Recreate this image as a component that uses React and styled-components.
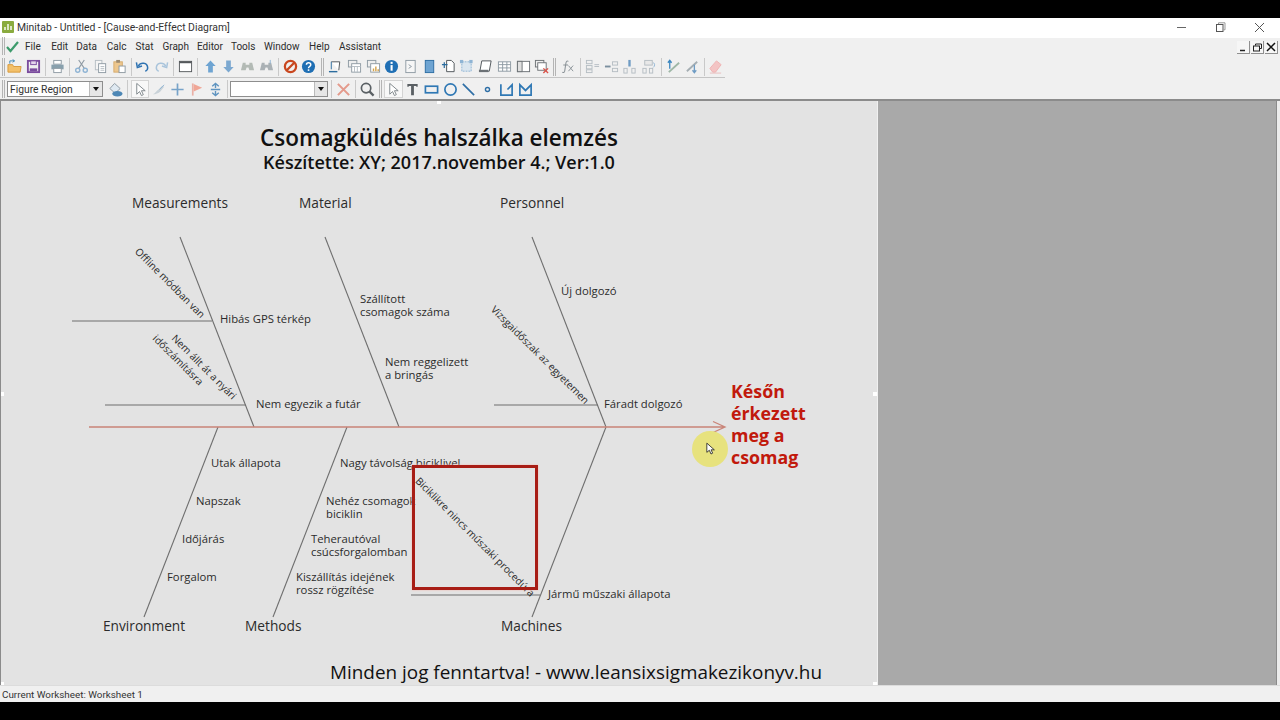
import React from "react";
import styled, { createGlobalStyle } from "styled-components";

const UI_FONT = `Roboto, "Open Sans", "Liberation Sans", sans-serif`;
const DIAGRAM_FONT = `"Open Sans", "Noto Sans", "Liberation Sans", sans-serif`;

const Global = createGlobalStyle`
  html, body { margin: 0; padding: 0; background: #000; overflow: hidden; }
  #root { width: 1280px; height: 720px; }
`;

const Screen = styled.div`
  width: 1280px;
  height: 720px;
  display: flex;
  flex-direction: column;
  background: #000;
  font-family: ${UI_FONT};
  color: #2a2a2a;
  overflow: hidden;
`;

const Letterbox = styled.div`
  height: 18px;
  flex: none;
  background: #000;
`;

const TitleBar = styled.div`
  height: 20px;
  flex: none;
  box-sizing: border-box;
  background: #fff;
  display: flex;
  align-items: center;
  padding: 0 0 2px 2px;
  gap: 3px;
  font-size: 10.4px;
  color: #333;
`;

const TitleText = styled.span`
  flex: 1;
`;

const WindowButtons = styled.div`
  display: flex;
  align-items: center;
  padding-right: 1.5px;
`;

const WindowButton = styled.div`
  width: 39px;
  height: 18px;
  display: flex;
  align-items: center;
  justify-content: center;
`;

const MenuBar = styled.div`
  height: 18px;
  flex: none;
  box-sizing: border-box;
  background: #f0f0f0;
  display: flex;
  align-items: center;
  padding: 0 0 2px 2px;
  font-size: 10px;
  color: #2d2d2d;
  position: relative;
`;

const MenuItem = styled.span`
  margin-left: ${(p) => p.$gap}px;
`;

const MdiButtons = styled.div`
  position: absolute;
  right: 2px;
  top: 3px;
  display: flex;
  gap: 1px;
`;

const MdiButton = styled.div`
  width: 13px;
  height: 13px;
  display: flex;
  align-items: center;
  justify-content: center;
  background: #f6f6f6;
  border-right: 1px solid #8f8f8f;
  border-bottom: 1px solid #8f8f8f;
  box-sizing: border-box;
`;

const ToolRow = styled.div`
  height: ${(p) => p.$height}px;
  flex: none;
  box-sizing: border-box;
  background: #f0f0f0;
  display: flex;
  align-items: center;
`;

const ToolGroup = styled.div`
  height: 21px;
  display: flex;
  align-items: center;
  width: ${(p) => p.$width}px;
  box-sizing: border-box;
  flex: none;
  border-bottom: ${(p) => (p.$line ? `1px solid ${p.$line}` : "none")};
  padding: ${(p) => (p.$line ? 0 : 1)}px 0 0 2px;
`;

const ToolBtn = styled.div`
  width: 18.75px;
  height: 18px;
  flex: none;
  display: flex;
  align-items: center;
  justify-content: center;
  box-sizing: border-box;
  ${(p) => p.$pressed && "background: #f8f8f8; border: 1px solid #d4d4d4;"}
`;

const Sep = styled.div`
  flex: none;
  width: 1px;
  height: 18px;
  background: #c9c9c9;
  margin: 0 ${(p) => p.$space ?? 2}px;
`;

const Grip = styled.div`
  flex: none;
  width: 3px;
  height: 18px;
  box-sizing: border-box;
  border-left: 1px solid #b4b4b4;
  border-right: 1px solid #b4b4b4;
  margin: 0 ${(p) => p.$space ?? 2}px;
  margin-left: ${(p) => (p.$first ? 0 : p.$space ?? 2)}px;
`;

const Gap = styled.div`
  flex: none;
  width: ${(p) => p.$width}px;
`;

const Combo = styled.div`
  flex: none;
  width: ${(p) => p.$width}px;
  height: 16px;
  box-sizing: border-box;
  background: #fff;
  border: 1px solid #8e8e8e;
  display: flex;
  align-items: center;
  justify-content: space-between;
  font-size: 10.3px;
  padding-left: 2px;
  color: #333;
`;

const ComboArrow = styled.div`
  width: 12px;
  height: 14px;
  background: #e6e6e6;
  border-left: 1px solid #bbb;
  display: flex;
  align-items: center;
  justify-content: center;
  &::after {
    content: "";
    border: 3px solid transparent;
    border-top: 4px solid #111;
    border-bottom: 0;
  }
`;

const Workspace = styled.div`
  flex: 1;
  display: flex;
  background: #a9a9a9;
  border-top: 2px solid #8b8b8b;
  min-height: 0;
`;

const Figure = styled.div`
  position: relative;
  width: 876px;
  flex: none;
  background: #e3e3e3;
  border-left: 1px solid #8b8b8b;
  border-right: 1px solid #f0f0f0;
  overflow: hidden;
  font-family: ${DIAGRAM_FONT};
`;

const Diagram = styled.div`
  position: absolute;
  left: 0;
  top: -1px;
`;

const Backdrop = styled.div`
  flex: 1;
  background: #a9a9a9;
`;

const Scrollbar = styled.div`
  width: 3px;
  flex: none;
  background: #ececec;
  border-left: 1px solid #8b8b8b;
`;

const Handle = styled.div`
  position: absolute;
  left: ${(p) => p.$x}px;
  top: ${(p) => p.$y}px;
  width: 4px;
  height: 4px;
  background: #fff;
`;

const Bones = styled.svg`
  position: absolute;
  left: -1px;
  top: -100px;
  width: 1280px;
  height: 720px;
`;

const Centered = styled.div`
  position: absolute;
  left: ${(p) => p.$x}px;
  top: ${(p) => p.$y}px;
  transform: translate(-50%, -50%);
  white-space: nowrap;
  line-height: 1;
  color: #111;
  font-size: ${(p) => p.$size}px;
  font-weight: ${(p) => p.$weight};
`;

const Category = styled.div`
  position: absolute;
  left: ${(p) => p.$x}px;
  top: ${(p) => p.$y}px;
  transform: translateY(-50%);
  font-size: 13.7px;
  white-space: nowrap;
  color: #2b2b2b;
`;

const Cause = styled.div`
  position: absolute;
  left: ${(p) => p.$x}px;
  top: ${(p) => p.$y}px;
  font-size: 11.3px;
  line-height: 12.6px;
  white-space: pre;
  color: #2b2b2b;
`;

const SlantedCause = styled.div`
  position: absolute;
  left: ${(p) => p.$x}px;
  top: ${(p) => p.$y}px;
  transform: translate(-50%, -50%) rotate(45deg);
  font-size: 10.2px;
  line-height: 13px;
  white-space: pre;
  color: #2b2b2b;
`;

const Effect = styled.div`
  position: absolute;
  left: 730px;
  top: 280px;
  font-size: 17.8px;
  line-height: 22px;
  font-weight: 700;
  white-space: pre;
  color: #c1190c;
`;

const Highlight = styled.div`
  position: absolute;
  left: 411px;
  top: 365px;
  width: 120px;
  height: 119px;
  border: 3px solid #a81d15;
  box-shadow: 0 0 2px #f3b7ae;
`;

const CursorHalo = styled.div`
  position: absolute;
  left: 690.500px;
  top: 331px;
  width: 36px;
  height: 36px;
  box-sizing: border-box;
  padding-left: 3px;
  border-radius: 50%;
  background: #e7e27e;
  display: flex;
  align-items: center;
  justify-content: center;
`;

const StatusBar = styled.div`
  height: 17px;
  flex: none;
  background: #f0f0f0;
  border-top: 1px solid #dcdcdc;
  box-sizing: border-box;
  display: flex;
  align-items: center;
  padding: 1px 0 0 2px;
  font-size: 9.85px;
  color: #333;
`;

const PALE = "#8fb4d4";
const GREY = "#8e9aa3";
const LIGHT = "#b5bdc3";

/* toolbar glyphs, 16x16 */
const glyphs = {
  open: <><path d="M1 6h5l1 2h8l-1 6H1z" fill="#f3c06a" stroke="#d89a3c" /><path d="M3 5V2h5M8 2l-2-1.500M8 2L6 3.500" fill="none" stroke="#3f88b8" /></>,
  save: <><rect x="2" y="2" width="12" height="12" fill="none" stroke="#7b4c9e" strokeWidth="2" /><rect x="5" y="2" width="6" height="4" fill="#e4d6ec" stroke="#7b4c9e" /><rect x="4" y="10" width="8" height="3" fill="#7b4c9e" /></>,
  print: <><rect x="4" y="1.500" width="8" height="4" fill="#fff" stroke={GREY} /><rect x="1.500" y="6" width="13" height="5" fill="#88a0ad" /><rect x="4" y="10" width="8" height="4.500" fill="#fff" stroke={GREY} /></>,
  cut: <><path d="M5 1l6 9M11 1L5 10" stroke={GREY} strokeWidth="1.200" /><circle cx="4" cy="12" r="2.200" fill="none" stroke={PALE} strokeWidth="1.500" /><circle cx="12" cy="12" r="2.200" fill="none" stroke={PALE} strokeWidth="1.500" /></>,
  copy: <><rect x="2.500" y="1.500" width="7" height="10" fill="#f4f4f4" stroke={LIGHT} /><rect x="6" y="5" width="7.500" height="9.500" fill="#fff" stroke={GREY} /><path d="M8 8h4M8 10h4M8 12h4" stroke={LIGHT} /></>,
  paste: <><rect x="2" y="3" width="9" height="11" fill="#edc78e" stroke="#d5aa6c" /><rect x="4.500" y="1" width="4" height="3" fill="#9c8b72" /><rect x="7.500" y="7.500" width="6.500" height="7" fill="#fff" stroke={GREY} /></>,
  undo: <><path d="M3.500 7.500C6 3 13 3.500 13.500 9c.2 2-1 3.500-2.500 4" fill="none" stroke="#2f73b2" strokeWidth="1.600" /><path d="M1.500 3.500l1 5.500 5-1.500" fill="none" stroke="#2f73b2" strokeWidth="1.600" /></>,
  redo: <><path d="M12.500 7.500C10 3 3 3.500 2.500 9c-.2 2 1 3.500 2.500 4" fill="none" stroke="#a9c4db" strokeWidth="1.600" /><path d="M14.500 3.500l-1 5.500-5-1.500" fill="none" stroke="#a9c4db" strokeWidth="1.600" /></>,
  pane: <><rect x="1.500" y="2.500" width="13" height="11" fill="#fff" stroke="#55595c" /><rect x="1.500" y="2.500" width="13" height="2" fill="#55595c" /></>,
  up: <path d="M8 1.500l5.500 6H10.500v7h-5v-7H2.500z" fill="#6ea4d2" />,
  down: <path d="M8 14.500l5.500-6H10.500v-7h-5v7H2.500z" fill="#7ca8d0" />,
  binoA: <path d="M3 4h3v2h4V4h3l2 8h-5l-1-3H7l-1 3H1z" fill="#b3bab5" />,
  binoB: <><path d="M3 4h3v2h4V4h3l2 8h-5l-1-3H7l-1 3H1z" fill="#aab1b5" /><path d="M12 1v4" stroke={PALE} /></>,
  stop: <><circle cx="8" cy="8" r="6" fill="none" stroke="#c9471f" strokeWidth="2.400" /><path d="M4 12l8-8" stroke="#c9471f" strokeWidth="2.400" /></>,
  help: <><circle cx="8" cy="8" r="7" fill="#1f6fb4" /><path d="M5.800 6.200c0-3 4.600-3 4.600 0 0 1.800-2.400 1.800-2.400 3.600" fill="none" stroke="#fff" strokeWidth="1.600" /><rect x="7.200" y="11" width="1.700" height="1.700" fill="#fff" /></>,
  info: <><circle cx="8" cy="8" r="7" fill="#1f6fb4" /><rect x="7" y="3" width="2.200" height="2.200" fill="#fff" /><rect x="7" y="6.500" width="2.200" height="6" fill="#fff" /></>,
  note: <><path d="M3.500 3h9l-1 9" fill="#fff" stroke="#4d5357" /><path d="M1 13.500h9" stroke="#2b6c9e" strokeWidth="1.500" /><path d="M3.500 3v8" stroke="#2b6c9e" /></>,
  stackA: <><rect x="1.500" y="1.500" width="9" height="7" fill="#eee" stroke={GREY} /><rect x="5" y="5" width="9.500" height="9" fill="#fff" stroke={GREY} /><path d="M5 8h9.500M8 8v6M11 8v6" stroke={LIGHT} /></>,
  stackB: <><rect x="1.500" y="1.500" width="9" height="7" fill="#eee" stroke={GREY} /><rect x="5" y="5" width="9.500" height="9" fill="#fff" stroke={GREY} /><path d="M8 13V10M10.500 13V8M13 13v-2" stroke="#d3a24a" strokeWidth="1.500" /></>,
  prompt: <><rect x="3" y="1.500" width="10" height="13" fill="#f6f6f6" stroke={GREY} /><path d="M6 6l3 2-3 2" fill="none" stroke={GREY} /></>,
  notebook: <rect x="3.500" y="1.500" width="9" height="13" fill="#6ea4d2" stroke="#2c6da3" />,
  newPage: <><path d="M6 1.500h5l3 3v9H6z" fill="#fff" stroke="#4d5357" /><path d="M1 6h6M3.500 3.500v6" stroke="#2b6c9e" strokeWidth="1.300" /></>,
  nodes: <><rect x="3" y="3" width="10" height="10" fill="#dbe6ef" stroke={PALE} strokeDasharray="2 1" /><rect x="1" y="1" width="3.500" height="3.500" fill={PALE} /><rect x="11" y="1" width="3.500" height="3.500" fill={PALE} /></>,
  scroll: <><path d="M4 2h10l-2 11H2z" fill="#fff" stroke="#4d5357" /><rect x="1" y="11.500" width="10" height="2.500" fill="#6b7175" /></>,
  grid: <><rect x="1.500" y="3" width="13" height="10" fill="#fff" stroke={GREY} /><path d="M1.500 6h13M1.500 9.500h13M6 3v10M10.500 3v10" stroke={GREY} /></>,
  split: <><rect x="1.500" y="2.500" width="13" height="11" fill="#fff" stroke="#6c7175" /><rect x="1.500" y="2.500" width="5" height="11" fill="#e0e0e0" stroke="#6c7175" /></>,
  closeAll: <><rect x="1.500" y="1.500" width="9" height="7" fill="#eee" stroke="#6c7175" /><rect x="4" y="4" width="9" height="8" fill="#fff" stroke="#6c7175" /><path d="M10 10l5 5M15 10l-5 5" stroke="#d9534a" strokeWidth="1.500" /></>,
  fx: <><path d="M9 2.500C7 1.500 6.500 3 6.200 5L5 13c-.3 1.500-1.500 1.800-2.500 1M3.500 6.500h5" fill="none" stroke="#8a9297" strokeWidth="1.100" /><path d="M9 7l5 6M14 7l-5 6" stroke="#8a9297" /></>,
  flowA: <><rect x="1.500" y="1.500" width="6" height="3.500" fill="none" stroke={LIGHT} /><rect x="1.500" y="7" width="6" height="3.500" fill="none" stroke={LIGHT} /><rect x="1.500" y="11.500" width="6" height="3" fill="none" stroke={LIGHT} /><path d="M10 6h5M10 8h5" stroke={LIGHT} /></>,
  flowB: <><path d="M1 8h6" stroke="#7b8f9f" strokeWidth="2" /><rect x="9" y="3" width="5.500" height="3.500" fill="none" stroke={LIGHT} /><rect x="9" y="10" width="5.500" height="3.500" fill="none" stroke={LIGHT} /></>,
  flowC: <><path d="M8 1v7" stroke="#6f9cc4" strokeWidth="2.500" /><rect x="2" y="10" width="3.500" height="5" fill="none" stroke={LIGHT} /><rect x="10.500" y="10" width="3.500" height="5" fill="none" stroke={LIGHT} /></>,
  flowD: <><rect x="4" y="1.500" width="8" height="5" fill="#e8e8e8" stroke={LIGHT} /><rect x="2" y="10" width="3.500" height="5" fill="none" stroke={LIGHT} /><rect x="9" y="10" width="3.500" height="5" fill="none" stroke={LIGHT} /><path d="M13 4c2 0 2 4 0 5" fill="none" stroke={PALE} /></>,
  sendA: <><path d="M3 14L14 4" stroke="#9eb7a6" strokeWidth="2" /><path d="M4 1.500v9M2 4l2-2.500L6 4" fill="none" stroke="#3b87c0" strokeWidth="1.400" /></>,
  sendB: <><path d="M2 13L13 3" stroke="#a5aeb3" strokeWidth="2" /><path d="M10 6v8M8 12l2 2.500L12 12" fill="none" stroke="#6f9cc4" strokeWidth="1.400" /></>,
  eraser: <><path d="M2 10l7-8 5 4-6 8H5z" fill="#f3c4c4" stroke="#eeb2b2" /><path d="M2 15h12" stroke="#e9bcbc" /></>,
  pointer: <path d="M4 1.500v11.500l3-2.800 2 4.300 2-1-2-4.200h4z" fill="#fff" stroke="#7d8489" />,
  brush: <><path d="M2 13c3-1 4-4 6-5l4-4 2 1-4 5c-2 2-5 3-8 3z" fill="#c9d2d8" /><path d="M9 8l5-5" stroke={PALE} /></>,
  cross: <path d="M8 1.500v13M1.500 8h13" stroke="#77a3c9" strokeWidth="1.800" />,
  flag: <><path d="M4 1.500v13" stroke="#eab0a6" strokeWidth="1.800" /><path d="M5 2l9 4-9 4z" fill="#f0a696" /></>,
  swap: <path d="M8 1.500v5M4.500 4.500L8 1.500l3.500 3M3 8h10M8 14.500v-5M4.500 11.500L8 14.500l3.500-3" fill="none" stroke="#5f94c0" strokeWidth="1.500" />,
  regions: <><path d="M2 7l5-5.500 6 5.500-5.500 5z" fill="#dfe9f1" stroke={GREY} /><ellipse cx="10" cy="12.500" rx="5.500" ry="3" fill="#4d87b5" /></>,
  remove: <path d="M2 2l12 12M14 2L2 14" stroke="#e49a8c" strokeWidth="2.200" />,
  search: <><circle cx="6.500" cy="6.500" r="5" fill="none" stroke="#5a6064" strokeWidth="1.800" /><path d="M10 10l4.500 4.500" stroke="#5a6064" strokeWidth="2.400" /></>,
  typeT: <path d="M2.500 2h11v3h-1.500v-.8H9.500V14H6.500V4.200H4v.8H2.500z" fill="#5a5f63" />,
  rect: <rect x="1.500" y="4.500" width="13" height="7" fill="none" stroke="#2f78b4" strokeWidth="1.800" />,
  circle: <circle cx="8" cy="8" r="6" fill="none" stroke="#2f78b4" strokeWidth="1.800" />,
  line: <path d="M2 2l12 12" stroke="#2f6fa6" strokeWidth="1.800" />,
  dot: <circle cx="8" cy="8" r="2.200" fill="none" stroke="#2f6fa6" strokeWidth="1.500" />,
  polyA: <path d="M2 2.500V14h12V3l-5 5" fill="none" stroke="#2f78b4" strokeWidth="1.800" />,
  polyB: <path d="M2 14V3l6 6 6-6v11z" fill="none" stroke="#2f78b4" strokeWidth="1.800" />,
};

function Glyph({ name }) {
  return <svg width="15" height="15" viewBox="0 0 16 16">{glyphs[name]}</svg>;
}

function Tools({ names }) {
  return names.map((name) => (
    <ToolBtn key={name}>
      <Glyph name={name} />
    </ToolBtn>
  ));
}

const menu = [
  ["File", 6], ["Edit", 10.500], ["Data", 8], ["Calc", 10], ["Stat", 9], ["Graph", 9],
  ["Editor", 8], ["Tools", 8], ["Window", 8.500], ["Help", 9.500], ["Assistant", 9.500],
];

const bones = [
  [180, 237, 254, 427], [72, 321, 212, 321], [105, 405, 246, 405],
  [325, 237, 399, 427],
  [532, 237, 606, 427], [494, 405, 598, 405],
  [218, 427, 144, 617], [347, 427, 273, 617],
  [606, 427, 532, 617], [411, 595, 540, 595],
];

const categories = [
  ["Measurements", 131, 102], ["Material", 298, 102], ["Personnel", 499, 102],
  ["Environment", 102, 525], ["Methods", 244, 525], ["Machines", 500, 525],
];

const causes = [
  ["Hibás GPS térkép", 219, 213],
  ["Nem egyezik a futár", 255, 298],
  ["Szállított\ncsomagok száma", 359, 193],
  ["Nem reggelizett\na bringás", 384, 256],
  ["Új dolgozó", 560, 185],
  ["Fáradt dolgozó", 603, 298],
  ["Utak állapota", 210, 357],
  ["Napszak", 195, 395],
  ["Időjárás", 181, 433],
  ["Forgalom", 166, 471],
  ["Nagy távolság biciklivel", 339, 357],
  ["Nehéz csomagok\nbiciklin", 325, 395],
  ["Teherautóval\ncsúcsforgalomban", 310, 433],
  ["Kiszállítás idejének\nrossz rögzítése", 295, 471],
  ["Jármű műszaki állapota", 547, 488],
];

const slanted = [
  ["Offline módban van", 168.500, 182.500],
  ["Nem állt át a nyári", 202.500, 266.500],
  ["időszámításra", 176.500, 259.500],
  ["Vizsgaidőszak az egyetemen", 539, 254.500],
  ["Biciklikre nincs műszaki procedúra", 473.500, 436.500],
];

export default function App() {
  return (
    <Screen>
      <Global />
      <Letterbox />
      <TitleBar>
        <svg width="12" height="12" viewBox="0 0 12 12">
          <rect width="12" height="12" rx="1" fill="#8aab3f" />
          <path d="M3 9V6M6 9V3M9 9V5" stroke="#fff" strokeWidth="1.400" />
        </svg>
        <TitleText>Minitab - Untitled - [Cause-and-Effect Diagram]</TitleText>
        <WindowButtons>
          <WindowButton>
            <svg width="11" height="11" viewBox="0 0 11 11"><path d="M1 5.500h9" stroke="#666" /></svg>
          </WindowButton>
          <WindowButton>
            <svg width="11" height="11" viewBox="0 0 11 11"><rect x="1.500" y="2.500" width="6.500" height="7" fill="#fff" stroke="#555" /><path d="M3.500 2V.8h6.500v7H8.500" fill="none" stroke="#999" /></svg>
          </WindowButton>
          <WindowButton>
            <svg width="11" height="11" viewBox="0 0 11 11"><path d="M1 1l9 9M10 1l-9 9" stroke="#555" /></svg>
          </WindowButton>
        </WindowButtons>
      </TitleBar>

      <MenuBar>
        <Grip $first $space={1} />
        <svg width="13" height="13" viewBox="0 0 13 13"><path d="M1 7l3.500 4L12 2" fill="none" stroke="#3d9b6c" strokeWidth="2.200" /></svg>
        {menu.map(([label, gap]) => (
          <MenuItem key={label} $gap={gap}>{label}</MenuItem>
        ))}
        <MdiButtons>
          <MdiButton>
            <svg width="9" height="9" viewBox="0 0 9 9"><path d="M1 7.500h5" stroke="#222" strokeWidth="1.500" /></svg>
          </MdiButton>
          <MdiButton>
            <svg width="9" height="9" viewBox="0 0 9 9"><rect x="0.500" y="3" width="6" height="5" fill="none" stroke="#222" /><path d="M2.500 2.500V1h6v4.500H7" fill="none" stroke="#222" /></svg>
          </MdiButton>
          <MdiButton>
            <svg width="10" height="10" viewBox="0 0 10 10"><path d="M1 1l8 8M9 1l-8 8" stroke="#111" strokeWidth="1.500" /></svg>
          </MdiButton>
        </MdiButtons>
      </MenuBar>

      <ToolRow $height={22}>
        <ToolGroup $width={725} $line="#c4c4c4">
          <Grip $first $space={0} />
          <Tools names={["open", "save"]} />
          <Sep $space={2.500} />
          <Tools names={["print"]} />
          <Sep />
          <Tools names={["cut", "copy", "paste"]} />
          <Sep $space={2} />
          <Tools names={["undo", "redo"]} />
          <Sep />
          <Tools names={["pane"]} />
          <Sep $space={2.500} />
          <Tools names={["up", "down", "binoA", "binoB"]} />
          <Sep $space={2} />
          <Tools names={["stop", "help"]} />
          <Grip $space={2.500} />
          <Tools names={["note", "stackA", "stackB", "info", "prompt", "notebook", "newPage", "nodes", "scroll", "grid", "split", "closeAll"]} />
          <Grip $space={2} />
          <Tools names={["fx"]} />
          <Sep $space={2.500} />
          <Tools names={["flowA", "flowB", "flowC", "flowD"]} />
          <Sep $space={2.500} />
          <Tools names={["sendA", "sendB"]} />
          <Sep $space={2} />
          <Tools names={["eraser"]} />
        </ToolGroup>
      </ToolRow>

      <ToolRow $height={21}>
        <ToolGroup $width={535}>
          <Grip $first $space={2} />
          <Combo $width={96}>
            Figure Region
            <ComboArrow />
          </Combo>
          <Gap $width={3.500} />
          <ToolBtn><Glyph name="regions" /></ToolBtn>
          <Sep $space={2.200} />
          <ToolBtn $pressed><Glyph name="pointer" /></ToolBtn>
          <Tools names={["brush", "cross", "flag", "swap"]} />
          <Sep $space={2.300} />
          <Combo $width={98}>
            <span />
            <ComboArrow />
          </Combo>
          <Sep $space={2.800} />
          <Tools names={["remove"]} />
          <Sep $space={2.100} />
          <Tools names={["search"]} />
          <Grip $space={2.100} />
          <ToolBtn $pressed><Glyph name="pointer" /></ToolBtn>
          <Tools names={["typeT", "rect", "circle", "line", "dot", "polyA", "polyB"]} />
        </ToolGroup>
      </ToolRow>

      <Workspace>
        <Figure>
          <Diagram>
            <Bones viewBox="0 0 1280 720">
              {bones.map(([x1, y1, x2, y2]) => (
                <line key={`${x1}-${y1}`} x1={x1} y1={y1} x2={x2} y2={y2} stroke="#6e6e6e" strokeWidth="1.100" />
              ))}
              <path d="M89 427H724M713 421.500L725 427 713 432.500" fill="none" stroke="#c98478" strokeWidth="1.300" />
            </Bones>

            <Centered $x={438} $y={38} $size={22.500} $weight={600}>Csomagküldés halszálka elemzés</Centered>
            <Centered $x={438} $y={62} $size={18} $weight={600}>Készítette: XY; 2017.november 4.; Ver:1.0</Centered>
            <Centered $x={575} $y={572} $size={18.900} $weight={500}>Minden jog fenntartva! - www.leansixsigmakezikonyv.hu</Centered>

            {categories.map(([text, x, y]) => (
              <Category key={text} $x={x} $y={y}>{text}</Category>
            ))}
            {causes.map(([text, x, y]) => (
              <Cause key={text} $x={x} $y={y}>{text}</Cause>
            ))}
            {slanted.map(([text, x, y]) => (
              <SlantedCause key={text} $x={x} $y={y}>{text}</SlantedCause>
            ))}

            <Effect>{"Későn\nérkezett\nmeg a\ncsomag"}</Effect>
            <Highlight />
            <CursorHalo>
              <svg width="10" height="14" viewBox="0 0 12 16">
                <path d="M1 1v11l3-2.500 2 4.500 2-1-2-4h4z" fill="#fff" stroke="#222" />
              </svg>
            </CursorHalo>
          </Diagram>

          <Handle $x={436} $y={-1} />
          <Handle $x={872} $y={291} />
          <Handle $x={872} $y={581} />
          <Handle $x={-1} $y={581} />
          <Handle $x={-1} $y={291} />
        </Figure>
        <Backdrop />
        <Scrollbar />
      </Workspace>

      <StatusBar>Current Worksheet: Worksheet 1</StatusBar>
      <Letterbox />
    </Screen>
  );
}
